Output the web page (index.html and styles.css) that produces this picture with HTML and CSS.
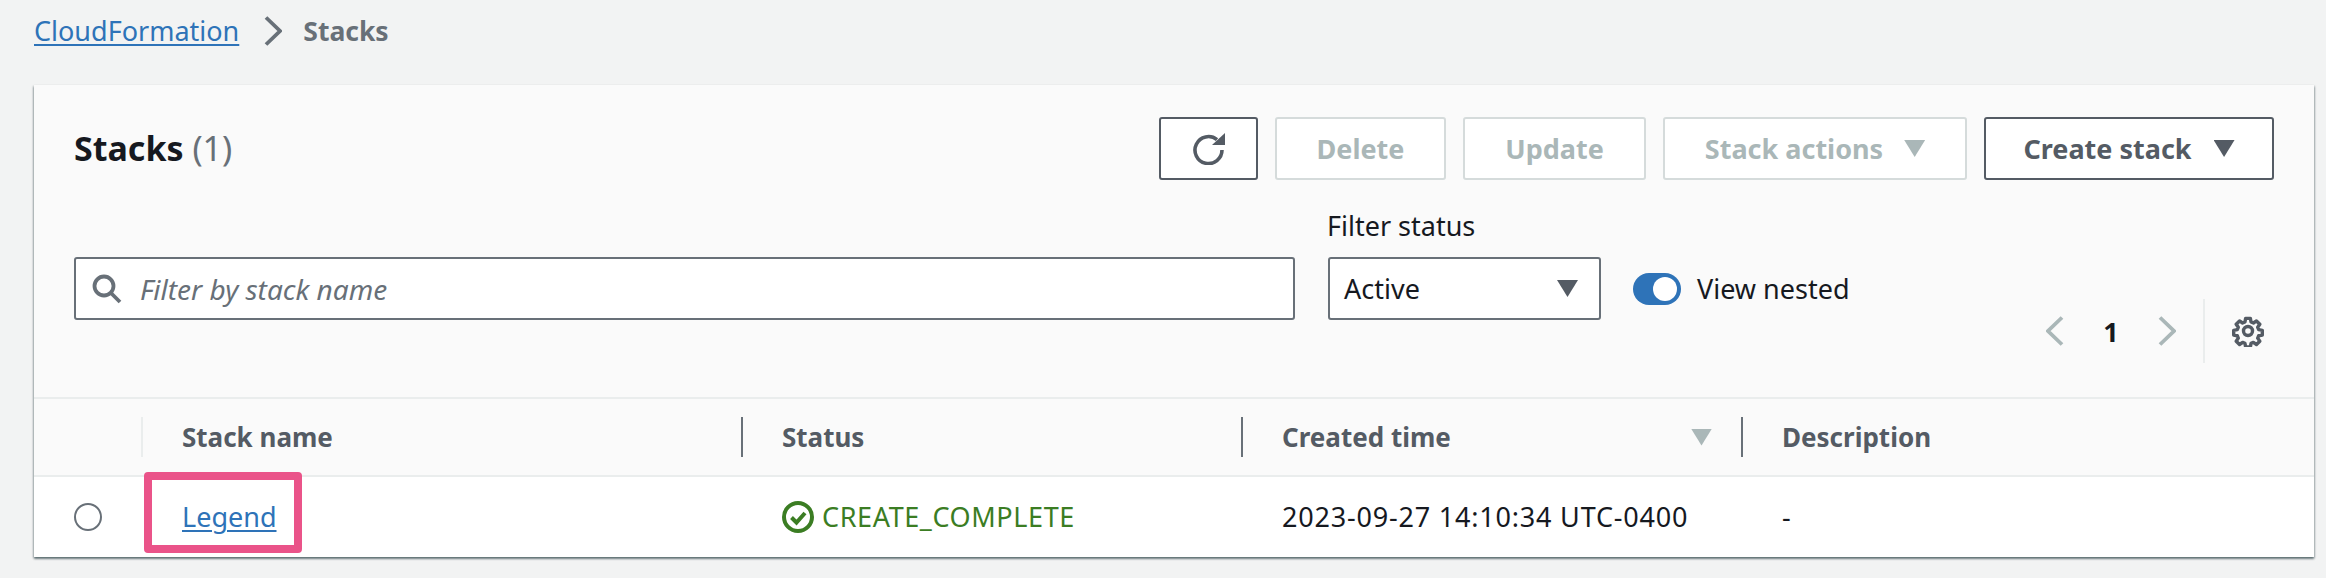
FILE: index.html
```html
<!DOCTYPE html>
<html lang="en">
<head>
<meta charset="utf-8">
<title>Stacks</title>
<link rel="stylesheet" href="styles.css">
</head>
<body>
<nav class="crumbs">
  <a class="link crumb-link" href="#">CloudFormation</a>
  <svg class="crumb-sep" viewBox="0 0 18 30"><path d="M2 1.500 16 15 2 28.500" fill="none" stroke="#687078" stroke-width="3.800"/></svg>
  <span class="crumb-current">Stacks</span>
</nav>
<main class="card">
  <header class="head">
    <h1 class="title">Stacks <span class="count">(1)</span></h1>
    <div class="actions">
      <button class="btn btn-icon" aria-label="Refresh">
        <svg viewBox="0 0 32 32" class="refresh"><path d="M24 6.600A13.500 13.500 0 1 0 29 17" fill="none" stroke="#545b64" stroke-width="3.600"/><path d="M19 12H32V0z" fill="#545b64"/></svg>
      </button>
      <button class="btn btn-off btn-delete">Delete</button>
      <button class="btn btn-off btn-update">Update</button>
      <button class="btn btn-off btn-stack">Stack actions<i class="tri tri-off"></i></button>
      <button class="btn btn-create">Create stack<i class="tri"></i></button>
    </div>
  </header>
  <section class="filters">
    <div class="search">
      <svg class="search-icon" viewBox="0 0 30 30"><circle cx="12" cy="12" r="9.500" fill="none" stroke="#687078" stroke-width="3.800"/><path d="M19 19l9 9" stroke="#687078" stroke-width="3.800"/></svg>
      <span class="placeholder">Filter by stack name</span>
    </div>
    <div class="status-filter">
      <label class="filter-label">Filter status</label>
      <div class="select"><span>Active</span><i class="tri"></i></div>
    </div>
    <div class="nested">
      <span class="toggle"><span class="knob"></span></span>
      <span>View nested</span>
    </div>
    <div class="pager">
      <svg class="chev" viewBox="0 0 18 30"><path d="M16 1.500 2 15 16 28.500" fill="none" stroke="#aab7b8" stroke-width="3.800"/></svg>
      <span class="page-num">1</span>
      <svg class="chev" viewBox="0 0 18 30"><path d="M2 1.500 16 15 2 28.500" fill="none" stroke="#aab7b8" stroke-width="3.800"/></svg>
      <span class="pager-div"></span>
      <svg class="gear" viewBox="0 0 32 32"><path d="M13.400 2h5.200l.8 4 2.600 1.100 3.400-2.300 3.700 3.700-2.300 3.400 1.100 2.600 4 .8v5.200l-4 .8-1.100 2.600 2.300 3.400-3.700 3.700-3.400-2.300-2.600 1.100-.8 4h-5.200l-.8-4-2.600-1.100-3.400 2.300-3.700-3.700 2.300-3.400-1.100-2.600-4-.8v-5.200l4-.8 1.100-2.600-2.300-3.400 3.700-3.700 3.400 2.300 2.600-1.100z" transform="translate(1.600 1.600) scale(.9)" fill="none" stroke="#545b64" stroke-width="3.800" stroke-linejoin="round"/><circle cx="16" cy="16" r="4.500" fill="none" stroke="#545b64" stroke-width="3.400"/></svg>
    </div>
  </section>
  <div class="table">
    <div class="th th-select"></div>
    <div class="th th-div th-light">Stack name</div>
    <div class="th th-div">Status</div>
    <div class="th th-div th-sort">Created time<i class="tri tri-off tri-sort"></i></div>
    <div class="th th-div">Description</div>
    <div class="td td-select"><span class="radio"></span></div>
    <div class="td td-name"><a class="link" href="#">Legend</a><span class="highlight"></span></div>
    <div class="td td-status">
      <svg class="ok" viewBox="0 0 32 32"><circle cx="16" cy="16" r="14" fill="none" stroke="#3b7d23" stroke-width="4"/><path d="M9.500 16.500l5 5 8.500-9.500" fill="none" stroke="#3b7d23" stroke-width="4"/></svg>
      <span class="status-text">CREATE_COMPLETE</span>
    </div>
    <div class="td td-date">2023-09-27 14:10:34 UTC-0400</div>
    <div class="td">-</div>
  </div>
</main>
</body>
</html>
```
FILE: styles.css
```css
* { box-sizing: border-box; }
html, body { margin: 0; }
body {
  width: 2326px;
  height: 578px;
  overflow: hidden;
  background: #f2f3f3;
  color: #16191f;
  font-family: "Noto Sans", "Open Sans", sans-serif;
  font-size: 27px;
  line-height: 32px;
}
.link { color: #2e73b8; text-decoration: underline; text-underline-offset: 3px; text-decoration-thickness: 2px; }
.crumbs { display: flex; align-items: center; height: 85px; padding: 0 0 24px 34px; }
.crumb-sep { width: 18px; height: 30px; margin: 0 21px 0 25px; }
.crumb-current { color: #687078; font-weight: 700; font-size: 26.500px; }
.card {
  margin-left: 34px;
  width: 2280px;
  height: 472px;
  background: #fafafa;
  box-shadow: 0 2px 2px 0 rgba(0, 28, 36, .45), 1px 1px 2px 0 rgba(0, 28, 36, .2), -1px 1px 2px 0 rgba(0, 28, 36, .2);
}
.head { display: flex; justify-content: space-between; align-items: center; padding: 32px 40px 0 40px; }
.title { margin: 0; font-size: 34px; font-weight: 700; line-height: 63px; }
.count { color: #687078; font-weight: 400; }
.actions { display: flex; gap: 17px; }
.btn {
  height: 63px;
  border: 2px solid #545b64;
  border-radius: 3px;
  background: #fff;
  color: #545b64;
  font: 700 27px/32px "Noto Sans", "Open Sans", sans-serif;
  padding: 0;
  display: flex;
  align-items: center;
  justify-content: center;
}
.btn-icon { width: 99px; }
.refresh { width: 32px; height: 32px; }
.btn-off { border-color: #d5dbdb; color: #aab7b8; }
.btn-delete { width: 171px; }
.btn-update { width: 183px; }
.btn-stack { width: 304px; gap: 21px; }
.btn-create { width: 290px; gap: 22px; }
.tri {
  display: block;
  width: 21px;
  height: 17px;
  background: #545b64;
  clip-path: polygon(0 0, 100% 0, 50% 100%);
}
.tri-off { background: #aab7b8; }
.filters { display: flex; align-items: flex-start; padding: 22px 50px 0 40px; height: 217px; }
.search {
  width: 1221px;
  height: 63px;
  margin-top: 55px;
  display: flex;
  align-items: center;
  gap: 18px;
  padding-left: 16px;
  background: #fff;
  border: 2px solid #687078;
  border-radius: 3px;
}
.search-icon { width: 30px; height: 30px; }
.placeholder { color: #687078; font-style: italic; font-size: 28px; }
.status-filter { margin-left: 33px; width: 273px; }
.filter-label { display: block; height: 55px; padding-top: 8px; margin-left: -1px; }
.select {
  height: 63px;
  display: flex;
  justify-content: space-between;
  align-items: center;
  padding: 0 21px 0 14px;
  background: #fff;
  border: 2px solid #687078;
  border-radius: 3px;
}
.nested { display: flex; align-items: center; gap: 16px; margin: 71px 0 0 32px; }
.toggle { display: block; position: relative; width: 48px; height: 32px; border-radius: 16px; background: #2e73b8; }
.knob { position: absolute; right: 4px; top: 4px; width: 24px; height: 24px; border-radius: 50%; background: #fff; }
.pager { display: flex; align-items: center; margin: 97px 0 0 auto; height: 64px; }
.chev { width: 18px; height: 30px; }
.page-num { width: 94px; padding-top: 2px; text-align: center; font-weight: 700; }
.pager-div { width: 2px; height: 64px; background: #eaeded; margin: 0 27px; }
.gear { width: 32px; height: 32px; }
.table {
  display: grid;
  grid-template-columns: 107px 600px 500px 500px 573px;
  grid-template-rows: 80px 80px;
}
.th {
  display: flex;
  align-items: center;
  position: relative;
  padding-left: 41px;
  color: #545b64;
  font-size: 26px;
  font-weight: 700;
  border-top: 2px solid #eaeded;
  border-bottom: 2px solid #eaeded;
}
.th-div::before {
  content: "";
  position: absolute;
  left: 0;
  top: 18px;
  width: 2px;
  height: 40px;
  background: #687078;
}
.th-light::before { background: #eaeded; }
.th-sort { padding-right: 29px; justify-content: space-between; }
.td {
  display: flex;
  align-items: center;
  padding-left: 41px;
  background: #fff;
}
.td-select { padding-left: 40px; }
.radio { display: block; width: 28px; height: 28px; border: 2px solid #687078; border-radius: 50%; }
.td-name { position: relative; }
.td-status { gap: 8px; color: #3b7d23; }
.status-text { letter-spacing: .6px; }
.td-date { letter-spacing: .8px; }
.ok { width: 32px; height: 32px; }
.highlight {
  position: absolute;
  left: 3px;
  top: -5px;
  width: 158px;
  height: 81px;
  border: 8px solid #ea5389;
  border-radius: 4px;
  pointer-events: none;
}
```
